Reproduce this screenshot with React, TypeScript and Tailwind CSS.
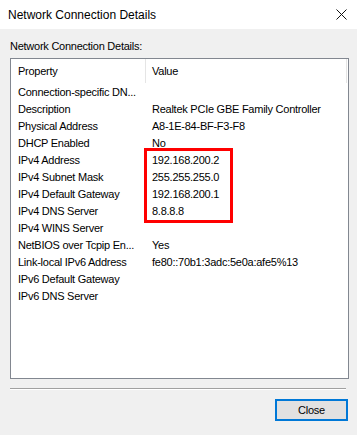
import React from "react";

const rows: [string, string][] = [
  ["Connection-specific DN...", ""],
  ["Description", "Realtek PCIe GBE Family Controller"],
  ["Physical Address", "A8-1E-84-BF-F3-F8"],
  ["DHCP Enabled", "No"],
  ["IPv4 Address", "192.168.200.2"],
  ["IPv4 Subnet Mask", "255.255.255.0"],
  ["IPv4 Default Gateway", "192.168.200.1"],
  ["IPv4 DNS Server", "8.8.8.8"],
  ["IPv4 WINS Server", ""],
  ["NetBIOS over Tcpip En...", "Yes"],
  ["Link-local IPv6 Address", "fe80::70b1:3adc:5e0a:afe5%13"],
  ["IPv6 Default Gateway", ""],
  ["IPv6 DNS Server", ""],
];

export default function App() {
  return (
    <div className="w-[358px] h-[435px] bg-[#f0f0f0] font-['Liberation_Sans',Arial,sans-serif] text-[11px] text-black tracking-[-0.25px] flex flex-col border-r border-white">
      <div className="h-[29px] bg-white flex items-center justify-between pl-[8px] pr-[10px] shrink-0">
        <span className="text-[12px] tracking-normal leading-[14px] text-black">Network Connection Details</span>
        <svg width="11" height="11" viewBox="0 0 11 11" className="mt-[-1px]">
          <path d="M0.5 0.5 L10.5 10.5 M10.5 0.5 L0.5 10.5" stroke="#111" strokeWidth="1" fill="none" />
        </svg>
      </div>
      <div className="flex-1 flex flex-col pl-[10px] pr-[9px] pt-[11px]">
        <div className="leading-[13px] mb-[5px]">Network Connection Details:</div>
        <div className="relative w-[339px] h-[321px] border border-[#828790] bg-white">
          <div className="flex h-[24px]">
            <div className="w-[135px] h-full pl-[7px] flex items-center border-r border-[#e5e5e5]">Property</div>
            <div className="w-[201px] h-full pl-[6px] flex items-center border-r border-[#e5e5e5]">Value</div>
          </div>
          <div className="pt-[1px]">
            {rows.map(([k, v]) => (
              <div key={k} className="flex h-[17px] leading-[17px] whitespace-nowrap">
                <div className="w-[135px] pl-[7px]">{k}</div>
                <div className="pl-[6px]">{v}</div>
              </div>
            ))}
          </div>
          <div className="absolute left-[133px] top-[89px] w-[89px] h-[75px] border-[3px] border-[#ff0000]" />
        </div>
        <div className="mt-[9px] w-[336px] h-0 border-t border-[#a0a0a0] border-b border-b-white" />
        <div className="flex justify-end mt-[9px]">
          <button className="w-[73px] h-[22px] border-2 border-[#0078d7] bg-[#e1e1e1] text-[11px] leading-none flex items-center justify-center text-black">
            Close
          </button>
        </div>
      </div>
    </div>
  );
}
